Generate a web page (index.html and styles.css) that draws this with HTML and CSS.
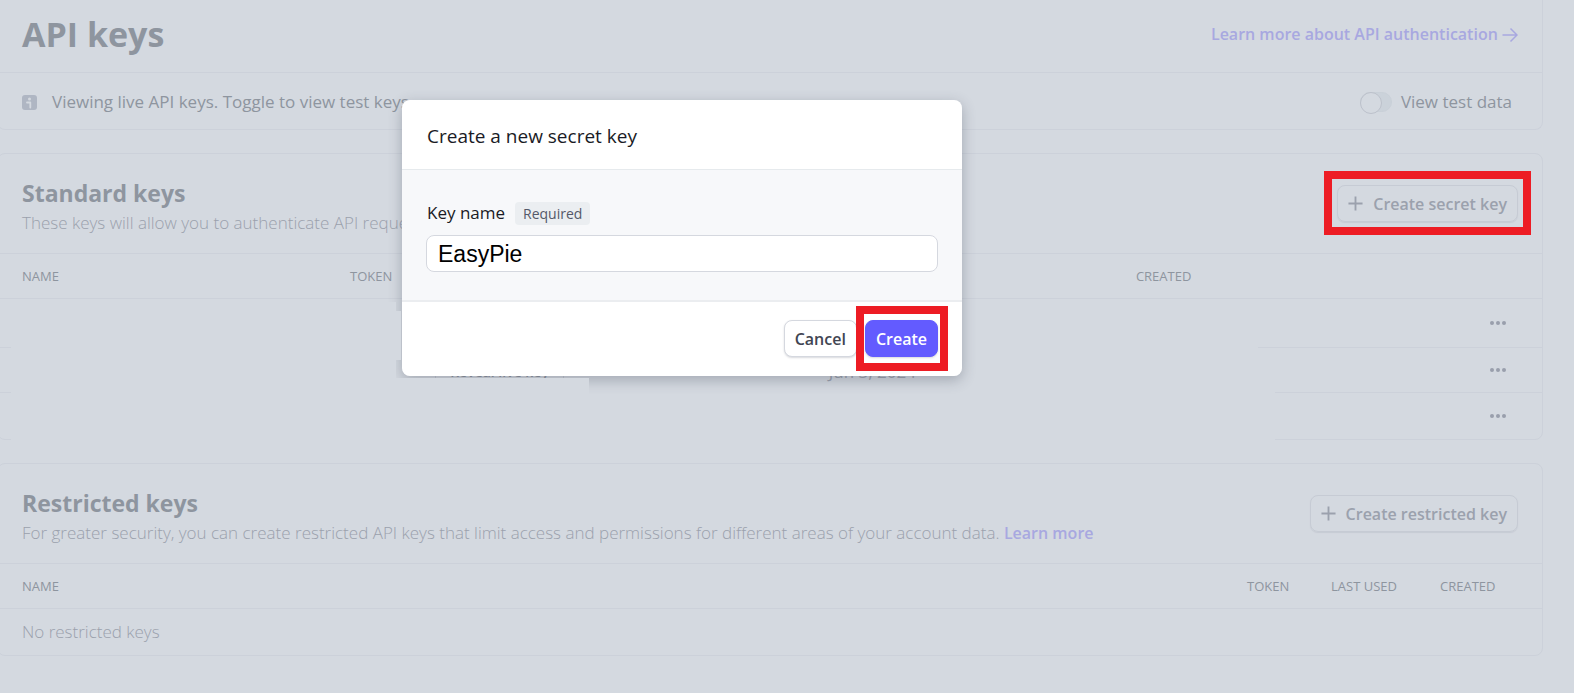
FILE: index.html
```html
<!DOCTYPE html>
<html lang="en">
<head>
<meta charset="utf-8">
<title>API keys</title>
<link rel="stylesheet" href="styles.css">
</head>
<body>
<main class="page">
  <section class="card card-first">
    <header class="page-head">
      <h1 class="page-title">API keys</h1>
      <a class="link" href="#">Learn more about API authentication
        <svg class="arrow" viewBox="0 0 16 16" width="16" height="16" fill="none" stroke="currentColor" stroke-width="1.500"><path d="M0.500 8H15M8.500 1.500L15 8L8.500 14.500"/></svg>
      </a>
    </header>
    <div class="notice">
      <svg class="info" viewBox="0 0 15 15" width="15" height="15"><rect width="15" height="15" rx="3" fill="#afb6c3"/><circle cx="7.500" cy="4" r="1.500" fill="#d4d9e0"/><path d="M5 7.500H8.300V12.500" fill="none" stroke="#d4d9e0" stroke-width="1.800" stroke-linecap="round" stroke-linejoin="round"/></svg>
      <p class="notice-text">Viewing live API keys. Toggle to view test keys.</p>
      <label class="toggle"><input class="switch" type="checkbox" role="switch">View test data</label>
    </div>
  </section>

  <section class="card">
    <header class="section-head">
      <div>
        <h2 class="section-title">Standard keys</h2>
        <p class="section-text">These keys will allow you to authenticate API requests.</p>
      </div>
      <span class="mark mark-secret"><button class="button button-dim" type="button"><svg viewBox="0 0 16 16" width="15" height="15" fill="none" stroke="currentColor" stroke-width="2"><path d="M8 0.500V15.500M0.500 8H15.500"/></svg>Create secret key</button></span>
    </header>
    <div class="keys">
      <table class="table">
        <colgroup><col class="c-name"><col class="c-token"><col class="c-used"><col class="c-created"></colgroup>
        <thead><tr><th>Name</th><th>Token</th><th></th><th>Created</th></tr></thead>
        <tbody>
          <tr class="row-tall"><td></td><td></td><td></td><td class="actions"><button class="more" type="button" aria-label="More"><i></i><i></i><i></i></button></td></tr>
          <tr><td></td><td class="low"><button class="reveal" type="button">Reveal live key</button></td><td class="low"><span class="above">Jun 3, 2024</span></td><td class="actions"><button class="more" type="button" aria-label="More"><i></i><i></i><i></i></button></td></tr>
          <tr><td></td><td></td><td></td><td class="actions"><button class="more" type="button" aria-label="More"><i></i><i></i><i></i></button></td></tr>
        </tbody>
      </table>
      <div class="blank blank-wide"></div>
      <div class="blank blank-low"></div>
    </div>
  </section>

  <section class="card">
    <header class="section-head">
      <div>
        <h2 class="section-title">Restricted keys</h2>
        <p class="section-text">For greater security, you can create restricted API keys that limit access and permissions for different areas of your account data. <a class="link" href="#">Learn more</a></p>
      </div>
      <button class="button button-dim" type="button"><svg viewBox="0 0 16 16" width="15" height="15" fill="none" stroke="currentColor" stroke-width="2"><path d="M8 0.500V15.500M0.500 8H15.500"/></svg>Create restricted key</button>
    </header>
    <table class="table">
      <colgroup><col><col class="r-token"><col class="r-used"><col class="r-created"></colgroup>
      <thead><tr><th>Name</th><th>Token</th><th>Last used</th><th>Created</th></tr></thead>
      <tbody><tr><td colspan="4">No restricted keys</td></tr></tbody>
    </table>
  </section>
</main>

<div class="modal">
  <div class="fade fade-left"></div>
  <div class="fade fade-edge"></div>
  <div class="fade fade-bottom"></div>
  <form class="dialog" role="dialog" aria-labelledby="dialog-title">
    <h2 class="dialog-title" id="dialog-title">Create a new secret key</h2>
    <div class="dialog-body">
      <div class="field-head"><label for="key-name">Key name</label><span class="chip">Required</span></div>
      <input class="field" id="key-name" type="text" value="EasyPie">
    </div>
    <footer class="dialog-foot">
      <button class="button" type="button">Cancel</button>
      <span class="mark mark-create"><button class="button button-primary" type="button">Create</button></span>
    </footer>
  </form>
</div>
</body>
</html>
```
FILE: styles.css
```css
* { box-sizing: border-box; }

:root {
  --bg: #d4d9e0;
  --line: #ccd1da;
  --dim: #9ba1ad;
  --dim-strong: #8e959f;
  --dim-link: #a8a8e0;
  --red: #ed1c24;
}

body {
  margin: 0;
  background: var(--bg);
  color: var(--dim);
  font-family: "Open Sans", "Noto Sans", sans-serif;
  font-size: 17px;
  line-height: 26px;
}

h1, h2, p { margin: 0; }
button, input { font: inherit; }

.page {
  margin: 0 31px 0 -3px;
  display: flex;
  flex-direction: column;
  gap: 23px;
}

.card {
  border: 1px solid var(--line);
  border-radius: 8px;
}

.card-first {
  border-top: 0;
  border-radius: 0 0 8px 8px;
}

.page-head {
  display: flex;
  align-items: center;
  justify-content: space-between;
  padding: 12px 24px 16px;
  border-bottom: 1px solid var(--line);
}

.page-title {
  color: var(--dim-strong);
  font-size: 34px;
  line-height: 44px;
  font-weight: 700;
}

.link {
  color: var(--dim-link);
  font-size: 16px;
  font-weight: 600;
  text-decoration: none;
}

.arrow { vertical-align: -3px; }

.notice {
  display: flex;
  align-items: center;
  padding: 16px 30px 14px 24px;
  color: var(--dim-strong);
}

.notice-text {
  margin-left: 15px;
  font-weight: 500;
}

.toggle {
  display: flex;
  align-items: center;
  gap: 9px;
  margin-left: auto;
}

.switch {
  appearance: none;
  width: 32px;
  height: 20px;
  margin: 0;
  border: 1px solid #c9d0d8;
  border-radius: 10px;
  background: #cbd2da;
}

.switch::before {
  content: "";
  display: block;
  width: 20px;
  height: 20px;
  margin: -1px;
  border: 1px solid #bcc1cb;
  border-radius: 50%;
  background: var(--bg);
}

.section-head {
  display: flex;
  align-items: flex-start;
  justify-content: space-between;
  padding: 22px 24px 17px;
  border-bottom: 1px solid var(--line);
}

.section-title {
  color: var(--dim-strong);
  font-size: 23px;
  line-height: 34px;
  font-weight: 700;
}

.section-text { font-weight: 300; }

.button {
  display: inline-flex;
  align-items: center;
  gap: 10px;
  height: 37px;
  padding: 0 10px;
  border: 1px solid #d5d8df;
  border-radius: 8px;
  background: #fff;
  color: #414552;
  font-size: 16px;
  font-weight: 600;
  box-shadow: 0 1px 2px rgba(60, 66, 87, 0.2);
}

.button-dim {
  border-color: #c6cbd4;
  background: transparent;
  color: var(--dim);
  box-shadow: 0 1px 1px #c6cbd4;
}

.section-head > .button,
.section-head > .mark { margin-top: 9px; }

.button-primary {
  border-color: #635bff;
  background: #635bff;
  color: #fff;
}

.mark {
  position: relative;
  display: inline-flex;
}

.mark::after {
  content: "";
  position: absolute;
  border: 8px solid var(--red);
  pointer-events: none;
}

.mark-secret::after { inset: -14px -13px -13px; }
.mark-create::after { inset: -14px -10px -14px -9px; }

.keys { position: relative; }

.table {
  width: 100%;
  table-layout: fixed;
  border-collapse: separate;
  border-spacing: 0;
}

.table th, .table td {
  padding: 0;
  text-align: left;
  font-weight: 300;
}

.table th {
  height: 45px;
  border-bottom: 1px solid var(--line);
  color: var(--dim-strong);
  font-size: 13px;
  font-weight: 500;
  text-transform: uppercase;
}

.table th:first-child, .table td:first-child { padding-left: 24px; }

.table td {
  height: 45px;
  border-bottom: 1px solid var(--line);
}

.table .row-tall td { height: 49px; }

.table tr:last-child td { border-bottom: 0; }

.table tbody tr:last-child td { height: 46px; }

.table .low { padding-top: 4px; }

.c-name { width: 22.8%; }
.c-token { width: 31%; }
.c-used { width: 19.9%; }
.r-token { width: 84px; }
.r-used { width: 109px; }
.r-created { width: 102px; }

.table .actions {
  padding: 0 36px 2px 0;
  text-align: right;
}

.more {
  display: inline-flex;
  gap: 2px;
  padding: 0;
  border: 0;
  background: none;
  vertical-align: middle;
}

.more i {
  width: 4px;
  height: 4px;
  border-radius: 50%;
  background: #999fac;
}

.reveal {
  position: relative;
  z-index: 1;
  width: 129px;
  height: 28px;
  margin-left: 85px;
  padding: 0;
  border: 1px solid #bfc5ce;
  border-width: 0 1px;
  background: none;
  color: var(--dim-strong);
  font-size: 14px;
  font-weight: 600;
}

.above {
  position: relative;
  z-index: 1;
  font-weight: 400;
}

.blank {
  position: absolute;
  background: var(--bg);
}

.blank-wide { inset: 46px 284px -1px 13px; }
.blank-low { inset: 96px 267px -1px 50%; }

.modal {
  position: absolute;
  z-index: 2;
  top: 100px;
  left: calc(50% - 385px);
  width: 560px;
  border-radius: 8px;
  box-shadow: 0 4px 14px rgba(60, 66, 80, 0.32);
}

.fade {
  position: absolute;
  background: var(--bg);
}

.fade-left { inset: 202px 100% -20px -20px; width: 14px; }
.fade-edge { top: 211px; left: -6px; width: 5px; height: 49px; }
.fade-bottom { top: calc(100% + 2px); left: -20px; width: 207px; height: 18px; }

.dialog {
  position: relative;
  overflow: hidden;
  border-radius: 8px;
  background: #fff;
  color: #1a1b25;
}

.dialog-title {
  padding: 23px 25px 20px;
  border-bottom: 1px solid #e6eaed;
  font-size: 19px;
  line-height: 26px;
  font-weight: 500;
}

.dialog-body {
  padding: 30px 24px 28px;
  border-bottom: 2px solid #ebedf0;
  background: #f7f8fa;
}

.field-head {
  display: flex;
  align-items: center;
  gap: 10px;
  margin-bottom: 9px;
  padding-left: 1px;
  font-weight: 500;
}

.chip {
  padding: 0 8px;
  border-radius: 4px;
  background: #ebeef1;
  color: #545969;
  font-size: 14px;
  line-height: 23px;
  font-weight: 500;
}

.field {
  display: block;
  width: 100%;
  height: 37px;
  padding: 1px 11px 0;
  border: 1px solid #d5d8df;
  border-radius: 8px;
  background: #fff;
  color: #000;
  font-family: "Liberation Sans", Arial, sans-serif;
  font-size: 23px;
}

.dialog-foot {
  display: flex;
  justify-content: flex-end;
  gap: 8px;
  padding: 18px 24px 19px;
}
```
